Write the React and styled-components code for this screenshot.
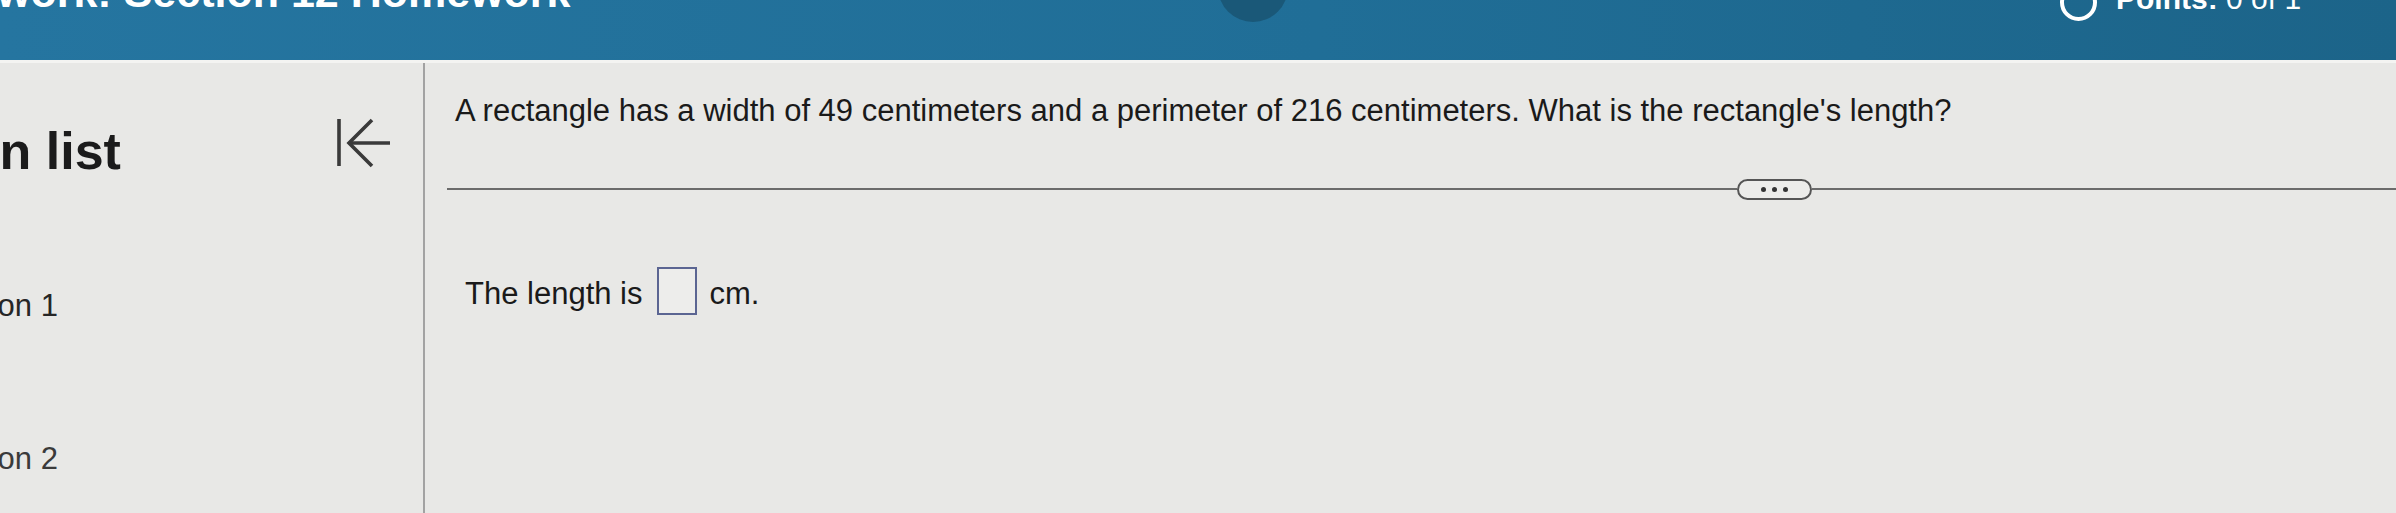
import styled, { createGlobalStyle } from "styled-components";

const GlobalStyle = createGlobalStyle`
	html, body {
		margin: 0;
		padding: 0;
		background: #e8e8e6;
	}
	body {
		font-family: "Liberation Sans", Arial, sans-serif;
		width: 2396px;
		height: 513px;
		overflow: hidden;
	}
`;

const Page = styled.div`
	display: flex;
	flex-direction: column;
	width: 2396px;
	height: 513px;
	overflow: hidden;
`;

const Header = styled.header`
	display: grid;
	grid-template-columns: 1218px 70px 772px auto;
	align-items: start;
	height: 62px;
	flex-shrink: 0;
	overflow: hidden;
	background: linear-gradient(90deg, #2575a0 0%, #206e97 55%, #1c6489 100%);
	border-bottom: 2px solid #18577a;
	box-sizing: border-box;
	color: #fff;
`;

const Title = styled.h1`
	margin: -29px 0 0 -3px;
	font-size: 43px;
	line-height: 42px;
	font-weight: 700;
	white-space: nowrap;
`;

const Avatar = styled.div`
	width: 70px;
	height: 70px;
	margin-top: -48px;
	border-radius: 50%;
	background: #1a5878;
`;

const Points = styled.div`
	display: flex;
	align-items: flex-start;
	gap: 19px;
`;

const Ring = styled.div`
	width: 37px;
	height: 37px;
	margin-top: -16px;
	border: 4px solid #fff;
	border-radius: 50%;
	box-sizing: border-box;
`;

const PointsText = styled.span`
	margin-top: -16px;
	font-size: 30px;
	line-height: 30px;
	white-space: nowrap;
	b {
		font-weight: 700;
	}
`;

const Body = styled.div`
	display: flex;
	flex: 1;
	border-top: 3px solid #f4f4f2;
	margin-top: -2px;
`;

const Sidebar = styled.aside`
	display: flex;
	flex-direction: column;
	width: 423px;
	flex-shrink: 0;
	padding-top: 55px;
	border-right: 2px solid #a2a2a2;
	overflow: hidden;
	color: #222;
`;

const SideHead = styled.div`
	display: flex;
	justify-content: space-between;
	align-items: flex-start;
	padding-right: 30px;
`;

const SideTitle = styled.h2`
	margin: 3px 0 0 -194px;
	font-size: 52px;
	line-height: 60px;
	font-weight: 700;
	white-space: nowrap;
	color: #1b1b1b;
`;

const QuestionList = styled.ul`
	display: flex;
	flex-direction: column;
	gap: 113px;
	margin: 105px 0 0;
	padding: 0;
	list-style: none;
`;

const QuestionItem = styled.li`
	margin-left: -92px;
	font-size: 31px;
	line-height: 40px;
	white-space: nowrap;
	color: ${(p) => (p.$dim ? "#3a3a3a" : "#262626")};
`;

const Main = styled.main`
	display: flex;
	flex-direction: column;
	flex: 1;
	padding-top: 28px;
	color: #1a1a1a;
`;

const Question = styled.p`
	margin: 0 0 0 30px;
	font-size: 31px;
	line-height: 40px;
	white-space: nowrap;
`;

const DividerRow = styled.div`
	display: flex;
	align-items: center;
	height: 22px;
	margin: 47px 0 0 22px;
`;

const Rule = styled.div`
	height: 2px;
	background: #6b6b6b;
	flex: ${(p) => (p.$width ? `0 0 ${p.$width}px` : "1")};
`;

const MoreButton = styled.button`
	display: flex;
	align-items: center;
	justify-content: center;
	gap: 6px;
	width: 75px;
	height: 21px;
	padding: 0;
	border: 2.5px solid #555;
	border-radius: 11px;
	background: #ececea;
	span {
		width: 5px;
		height: 5px;
		border-radius: 50%;
		background: #333;
	}
`;

const AnswerRow = styled.div`
	display: flex;
	align-items: flex-start;
	margin: 67px 0 0 40px;
	font-size: 31px;
	line-height: 40px;
`;

const AnswerText = styled.span`
	margin-top: 7px;
	white-space: nowrap;
`;

const AnswerBox = styled.div`
	width: 40px;
	height: 48px;
	margin: 0 13px 0 14px;
	border: 2px solid #5b6592;
	box-sizing: border-box;
	background: #ededeb;
`;

function CollapseIcon() {
	return (
		<svg width='56' height='50' viewBox='0 0 56 50' fill='none' stroke='#3a3a3a' strokeWidth='3.6'>
			<line x1='2' y1='1' x2='2' y2='48' />
			<line x1='12' y1='25' x2='53' y2='25' />
			<polyline points='35,2 12,25 35,48' strokeLinejoin='miter' />
		</svg>
	);
}

export default function App() {
	return (
		<Page>
			<GlobalStyle />
			<Header>
				<Title>work: Section 12 Homework</Title>
				<Avatar />
				<div />
				<Points>
					<Ring />
					<PointsText>
						<b>Points:</b> 0 of 1
					</PointsText>
				</Points>
			</Header>
			<Body>
				<Sidebar>
					<SideHead>
						<SideTitle>Question list</SideTitle>
						<CollapseIcon />
					</SideHead>
					<QuestionList>
						<QuestionItem>Question 1</QuestionItem>
						<QuestionItem $dim>Question 2</QuestionItem>
					</QuestionList>
				</Sidebar>
				<Main>
					<Question>
						A rectangle has a width of 49 centimeters and a perimeter of 216 centimeters. What
						is the rectangle's length?
					</Question>
					<DividerRow>
						<Rule $width={1290} />
						<MoreButton aria-label='more'>
							<span />
							<span />
							<span />
						</MoreButton>
						<Rule />
					</DividerRow>
					<AnswerRow>
						<AnswerText>The length is</AnswerText>
						<AnswerBox />
						<AnswerText>cm.</AnswerText>
					</AnswerRow>
				</Main>
			</Body>
		</Page>
	);
}
